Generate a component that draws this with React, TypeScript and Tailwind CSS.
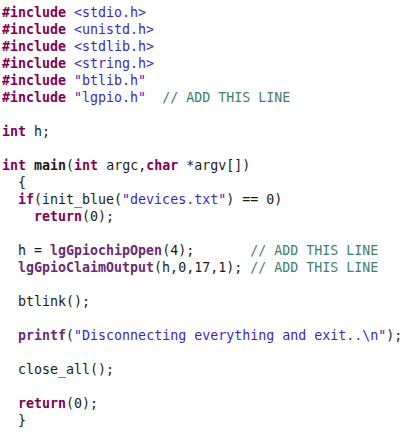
type Tok = [string, string?];

const KW = "font-bold text-[#7f0055]";
const FN = "font-bold text-[#6a2a7a]";
const STR = "text-[#3b1fd0]";
const CMT = "text-[#3f7f6f]";
const BOLD = "font-bold";

const lines: Tok[][] = [
  [["#include", KW], [" "], ["<stdio.h>", STR]],
  [["#include", KW], [" "], ["<unistd.h>", STR]],
  [["#include", KW], [" "], ["<stdlib.h>", STR]],
  [["#include", KW], [" "], ["<string.h>", STR]],
  [["#include", KW], [" "], ['"btlib.h"', STR]],
  [["#include", KW], [" "], ['"lgpio.h"', STR], ["  "], ["// ADD THIS LINE", CMT]],
  [],
  [["int", KW], [" h;"]],
  [],
  [["int", KW], [" "], ["main", BOLD], ["("], ["int", KW], [" argc,"], ["char", KW], [" *argv[])"]],
  [["  {"]],
  [["  "], ["if", KW], ["(init_blue("], ['"devices.txt"', STR], [") == 0)"]],
  [["    "], ["return", KW], ["(0);"]],
  [],
  [["  h = "], ["lgGpiochipOpen", FN], ["(4);       "], ["// ADD THIS LINE", CMT]],
  [["  "], ["lgGpioClaimOutput", FN], ["(h,0,17,1); "], ["// ADD THIS LINE", CMT]],
  [],
  [["  btlink();"]],
  [],
  [["  "], ["printf", FN], ["("], ['"Disconnecting everything and exit..\\n"', STR], [");"]],
  [],
  [["  close_all();"]],
  [],
  [["  "], ["return", KW], ["(0);"]],
  [["  }"]],
];

export default function App() {
  return (
    <div className="h-[431px] w-[403px] overflow-hidden bg-white">
      <pre className="pl-[2px] pt-[4px] font-['DejaVu_Sans_Mono',monospace] text-[13.3px] leading-[17px] text-[#1a1a1a]">
        {lines.map((toks, i) => (
          <div key={i} className="h-[17px] whitespace-pre">
            {toks.map(([t, c], j) => (
              <span key={j} className={c}>
                {t}
              </span>
            ))}
          </div>
        ))}
      </pre>
    </div>
  );
}
